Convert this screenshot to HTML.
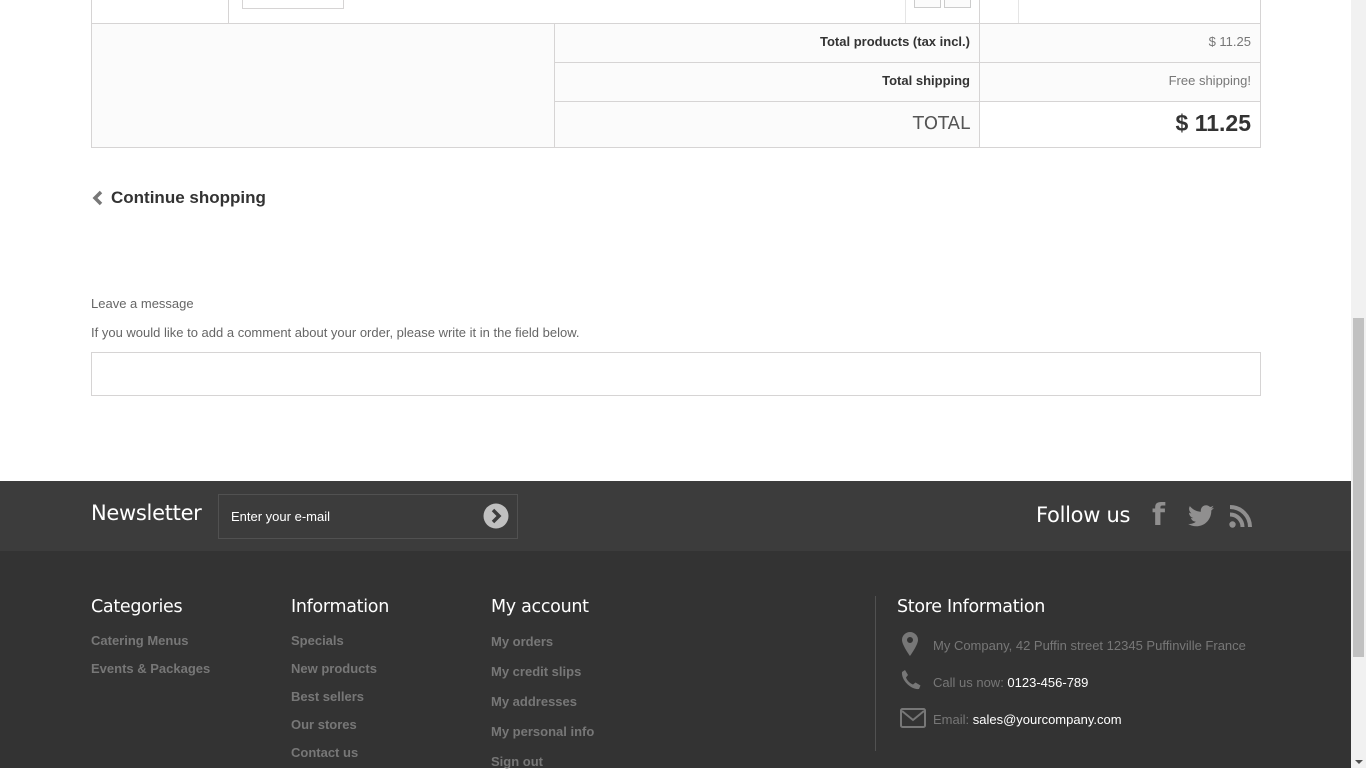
<!DOCTYPE html>
<html><head><meta charset="utf-8"><style>
*{box-sizing:border-box;margin:0;padding:0}
body{width:1366px;height:768px;overflow:hidden;position:relative;background:#fff;font-family:"Liberation Sans",Arial,sans-serif;}
.abs{position:absolute}
.os{font-family:"DejaVu Sans","Liberation Sans",sans-serif}
.h{font-family:"DejaVu Sans",sans-serif;font-size:17.5px;color:#fff;letter-spacing:-0.3px}
.b{border:1px solid #d6d4d4}
.lnk{color:#777;font-weight:bold;font-size:13px}
</style></head><body>
<div class="abs" style="left:91px;top:0;width:1170px;height:24px;border-left:1px solid #d6d4d4;border-right:1px solid #d6d4d4"></div>
<div class="abs" style="left:228px;top:0;width:1px;height:24px;background:#d6d4d4"></div>
<div class="abs" style="left:242px;top:-2px;width:102px;height:11px;border:1px solid #d6d4d4"></div>
<div class="abs" style="left:905px;top:0;width:1px;height:24px;background:#e5e5e5"></div>
<div class="abs" style="left:979px;top:0;width:1px;height:24px;background:#d6d4d4"></div>
<div class="abs" style="left:1018px;top:0;width:1px;height:24px;background:#e5e5e5"></div>
<div class="abs" style="left:914px;top:-2px;width:27px;height:10px;border:1px solid #ccc;background:#fbfbfb"></div>
<div class="abs" style="left:944px;top:-2px;width:27px;height:10px;border:1px solid #ccc;background:#fbfbfb"></div>
<div class="abs b" style="left:91px;top:23px;width:1170px;height:125px;background:#fbfbfb"></div>
<div class="abs" style="left:554px;top:24px;width:1px;height:123px;background:#d6d4d4"></div>
<div class="abs" style="left:979px;top:24px;width:1px;height:123px;background:#d6d4d4"></div>
<div class="abs" style="left:555px;top:62px;width:705px;height:1px;background:#d6d4d4"></div>
<div class="abs" style="left:555px;top:101px;width:705px;height:1px;background:#d6d4d4"></div>
<div class="abs" style="left:980px;top:102px;width:280px;height:45px;background:#fff"></div>
<div class="abs" style="right:396px;top:34px;font-size:13px;font-weight:bold;color:#333">Total products (tax incl.)</div>
<div class="abs" style="right:115px;top:34px;font-size:13px;color:#777">$ 11.25</div>
<div class="abs" style="right:396px;top:73px;font-size:13px;font-weight:bold;color:#333">Total shipping</div>
<div class="abs" style="right:115px;top:73px;font-size:13px;color:#777">Free shipping!</div>
<div class="abs os" style="right:396px;top:113px;font-size:18px;color:#555">TOTAL</div>
<div class="abs" style="right:115px;top:110px;font-size:23px;font-weight:bold;color:#333">$ 11.25</div>
<svg class="abs" style="left:91px;top:190px" width="12" height="16" viewBox="0 0 12 16"><path d="M10 2 L4 8 L10 14" stroke="#777" stroke-width="3.5" fill="none"/></svg>
<div class="abs" style="left:111px;top:188px;font-size:17px;font-weight:bold;color:#333">Continue shopping</div>
<div class="abs" style="left:91px;top:296px;font-size:13px;color:#666">Leave a message</div>
<div class="abs" style="left:91px;top:325px;font-size:13px;color:#666">If you would like to add a comment about your order, please write it in the field below.</div>
<div class="abs b" style="left:91px;top:352px;width:1170px;height:44px"></div>
<div class="abs" style="left:0;top:481px;width:1351px;height:70px;background:#3c3c3c"></div>
<div class="abs h" style="left:91px;top:501px;font-size:21px">Newsletter</div>
<div class="abs" style="left:218px;top:494px;width:300px;height:45px;border:1px solid #515151;background:#3c3c3c"></div>
<div class="abs" style="left:231px;top:509px;font-size:13px;color:#fff">Enter your e-mail</div>
<svg class="abs" style="left:483px;top:503px" width="26" height="26" viewBox="0 0 26 26"><circle cx="13" cy="13" r="12.5" fill="#c0c0c0"/><path d="M10 7 L16 13 L10 19" stroke="#3c3c3c" stroke-width="3.5" fill="none"/></svg>
<div class="abs h" style="left:1036px;top:503px;font-size:21px">Follow us</div>
<div class="abs" style="left:1152px;top:498px;font-size:30px;font-weight:bold;color:#908f8f;font-family:'DejaVu Sans',sans-serif">f</div>
<svg class="abs" style="left:1188px;top:505px" width="26" height="22" viewBox="0 0 24 20"><path d="M24 2.4c-.9.4-1.8.7-2.8.8 1-.6 1.8-1.6 2.2-2.7-1 .6-2 1-3.1 1.2C19.4.7 18.1.1 16.7.1c-2.7 0-4.9 2.2-4.9 4.9 0 .4 0 .8.1 1.1C7.8 5.9 4.2 4 1.7.9c-.4.7-.7 1.600-.7 2.5 0 1.7.9 3.2 2.2 4.1-.8 0-1.6-.2-2.2-.6v.1c0 2.4 1.7 4.4 3.9 4.8-.4.1-.8.2-1.3.2-.3 0-.6 0-.9-.1.6 2 2.4 3.4 4.6 3.4-1.7 1.3-3.8 2.1-6.1 2.1-.4 0-.8 0-1.2-.1 2.2 1.4 4.800 2.2 7.5 2.2 9.1 0 14-7.5 14-14v-.6c1-.7 1.8-1.6 2.5-2.5z" fill="#908f8f"/></svg>
<svg class="abs" style="left:1229px;top:505px" width="23" height="23" viewBox="0 0 23 23"><circle cx="3.5" cy="19.5" r="3.2" fill="#908f8f"/><path d="M1 9.5a12.5 12.5 0 0 1 12.5 12.5M1 2a20 20 0 0 1 20 20" stroke="#908f8f" stroke-width="4" fill="none"/></svg>
<div class="abs" style="left:0;top:551px;width:1351px;height:217px;background:#333"></div>
<div class="abs h" style="left:91px;top:597px">Categories</div>
<div class="abs lnk" style="left:91px;top:633px">Catering Menus</div>
<div class="abs lnk" style="left:91px;top:661px">Events &amp; Packages</div>
<div class="abs h" style="left:291px;top:597px">Information</div>
<div class="abs lnk" style="left:291px;top:633px">Specials</div>
<div class="abs lnk" style="left:291px;top:661px">New products</div>
<div class="abs lnk" style="left:291px;top:689px">Best sellers</div>
<div class="abs lnk" style="left:291px;top:717px">Our stores</div>
<div class="abs lnk" style="left:291px;top:745px">Contact us</div>
<div class="abs h" style="left:491px;top:597px">My account</div>
<div class="abs lnk" style="left:491px;top:634px">My orders</div>
<div class="abs lnk" style="left:491px;top:664px">My credit slips</div>
<div class="abs lnk" style="left:491px;top:694px">My addresses</div>
<div class="abs lnk" style="left:491px;top:724px">My personal info</div>
<div class="abs lnk" style="left:491px;top:754px">Sign out</div>
<div class="abs" style="left:875px;top:596px;width:1px;height:155px;background:#515151"></div>
<div class="abs h" style="left:897px;top:597px">Store Information</div>
<svg class="abs" style="left:902px;top:632px" width="16" height="24" viewBox="0 0 16 24"><path d="M8 0a8 8 0 0 0-8 8c0 5 8 16 8 16s8-11 8-16a8 8 0 0 0-8-8zm0 11a3 3 0 1 1 0-6 3 3 0 0 1 0 6z" fill="#777"/></svg>
<div class="abs" style="left:933px;top:638px;font-size:13px;color:#777">My Company, 42 Puffin street 12345 Puffinville France</div>
<svg class="abs" style="left:900px;top:669px" width="22" height="22" viewBox="0 0 22 22"><path d="M5 1 L8 6 L6 8.5 C7 11.5 10 14.5 13 15.5 L15.5 13.5 L20.5 16.5 L19 20 C11 21 1 11 2 3 Z" fill="#777"/></svg>
<div class="abs" style="left:933px;top:675px;font-size:13px;color:#777">Call us now: <span style="color:#fff">0123-456-789</span></div>
<svg class="abs" style="left:900px;top:708px" width="26" height="20" viewBox="0 0 26 20"><rect x="1" y="1" width="24" height="18" rx="1.5" stroke="#777" stroke-width="2" fill="none"/><path d="M2 3 L13 12 L24 3" stroke="#777" stroke-width="2" fill="none"/></svg>
<div class="abs" style="left:933px;top:712px;font-size:13px;color:#777">Email: <span style="color:#fff">sales@yourcompany.com</span></div>
<div class="abs" style="left:1351px;top:0;width:15px;height:768px;background:#f1f1f1"></div>
<div class="abs" style="left:1353px;top:318px;width:11px;height:339px;background:#c1c1c1"></div>
<div class="abs" style="left:1355px;top:760px;width:0;height:0;border-left:4px solid transparent;border-right:4px solid transparent;border-top:4px solid #505050"></div>
</body></html>
